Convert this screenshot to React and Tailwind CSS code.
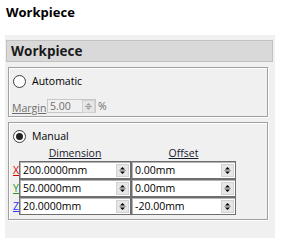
import React from "react";

const F = { fontFamily: '"Open Sans", "Noto Sans", sans-serif' };

function SpinBtn({ disabled }) {
  const c = disabled ? "#a0a0a0" : "#000";
  return (
    <div className="w-[13px] h-[13px] bg-[#e6e6e6] border border-[#d2d2d2] flex items-center justify-center">
      <svg width="11" height="11" viewBox="0 0 11 11">
        <path d="M3 4.5 L5.5 2 L8 4.5 Z" fill={c} />
        <line x1="2" y1="5.5" x2="9" y2="5.5" stroke="#a8a8a8" strokeWidth="1" />
        <path d="M3 6.5 L8 6.5 L5.5 9 Z" fill={c} />
      </svg>
    </div>
  );
}

function Cell({ value, w }) {
  return (
    <div
      className={`${w} h-[18px] bg-white border border-[#6e6e6e] shadow-[inset_1px_1px_0_#b4b4b4] flex items-center justify-between pl-[3px] pr-[1px]`}
    >
      <span className="text-[10.5px] leading-none text-black">{value}</span>
      <SpinBtn />
    </div>
  );
}

function Radio({ checked }) {
  return (
    <div className="w-[13px] h-[13px] rounded-full border border-[#3c3c3c] bg-white flex items-center justify-center">
      {checked && <div className="w-[7px] h-[7px] rounded-full bg-[#222]" />}
    </div>
  );
}

export default function App() {
  const rows = [
    { l: "X", c: "text-[#e00000]", d: "200.0000mm", o: "0.00mm" },
    { l: "Y", c: "text-[#1f9b1f]", d: "50.0000mm", o: "0.00mm" },
    { l: "Z", c: "text-[#3333ff]", d: "20.0000mm", o: "-20.00mm" },
  ];
  return (
    <div className="w-[281px] h-[247px] bg-white overflow-hidden" style={F}>
      <div className="h-[35px] pl-[6px] pt-[3px] text-[13px] font-bold text-black leading-[18px]">
        Workpiece
      </div>
      <div className="ml-[5px] w-[270px] h-[203px] bg-[#f0f0f0] pt-[5px]">
        <div className="ml-[1px] w-[267px] h-[22px] bg-[#d9d9d9] border border-[#c2c2c2] pl-[4px] flex items-center text-[13.5px] font-bold text-[#1a1a1a]">
          Workpiece
        </div>
        <div className="ml-[3px] mt-[5px] w-[260px] h-[50px] border border-[#a0a0a0] shadow-[inset_1px_1px_0_#ffffff,1px_1px_0_#ffffff] pl-[4px] pt-[7px]">
          <div className="flex items-center gap-[6px] h-[13px]">
            <Radio />
            <span className="text-[10.5px] text-black leading-none">Automatic</span>
          </div>
          <div className="flex items-center mt-[11px] h-[14px]">
            <span className="w-[35px] -ml-px">
              <span className="text-[10.5px] text-[#6d6d6d] underline leading-none">Margin</span>
            </span>
            <div className="w-[49px] h-[14px] border border-[#c8c8c8] flex items-center justify-between pl-[2px] pr-0">
              <span className="text-[10.5px] text-[#6d6d6d] leading-none">5.00</span>
              <SpinBtn disabled />
            </div>
            <span className="ml-[2px] text-[10.5px] text-[#6d6d6d] leading-none">%</span>
          </div>
        </div>
        <div className="ml-[3px] mt-[5px] w-[260px] h-[98px] border border-[#a0a0a0] shadow-[inset_1px_1px_0_#ffffff,1px_1px_0_#ffffff] pl-[4px] pt-[7px]">
          <div className="flex items-center gap-[6px] h-[13px]">
            <Radio checked />
            <span className="text-[10.5px] text-black leading-none">Manual</span>
          </div>
          <div className="flex mt-[5px] h-[13px] pl-[6px]">
            <div className="w-[112px] flex justify-center">
              <span className="text-[10.5px] text-[#1a1a2e] underline leading-[11px]">Dimension</span>
            </div>
            <div className="w-[105px] flex justify-center">
              <span className="text-[10.5px] text-[#1a1a2e] underline leading-[11px]">Offset</span>
            </div>
          </div>
          <div className="flex flex-col">
            {rows.map((r) => (
              <div key={r.l} className="flex items-center h-[18px]">
                <span className={`w-[6px] text-[10.5px] underline leading-none ${r.c}`}>{r.l}</span>
                <Cell value={r.d} w="w-[112px]" />
                <Cell value={r.o} w="w-[105px]" />
              </div>
            ))}
          </div>
        </div>
      </div>
    </div>
  );
}
